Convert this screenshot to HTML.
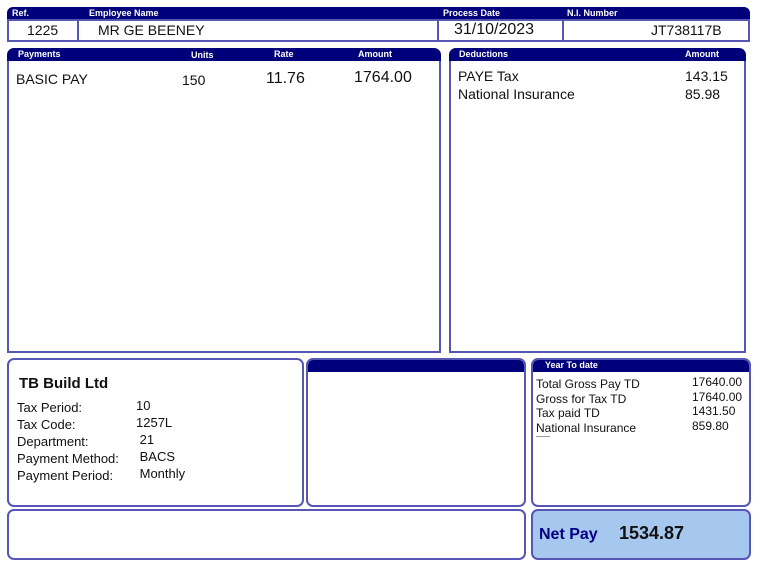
<!DOCTYPE html>
<html><head><style>
*{margin:0;padding:0;box-sizing:border-box}
body{width:768px;height:566px;background:#fff;position:relative;font-family:"Liberation Sans",Arial,sans-serif;color:#111;overflow:hidden}
.a{position:absolute}
.nav{background:#00007a;color:#fff;font-weight:bold;font-size:9px}
.bx{border:2px solid #5656b4;background:#fff}
.t{position:absolute;white-space:nowrap}
</style></head><body>
<!-- top header -->
<div class="a nav" style="left:7px;top:7px;width:743px;height:13px;border-radius:6px 6px 0 0"></div>
<div class="t" style="left:12px;top:8px;font-size:9px;color:#fff;font-weight:bold">Ref.</div>
<div class="t" style="left:89px;top:8px;font-size:9px;color:#fff;font-weight:bold">Employee Name</div>
<div class="t" style="left:443px;top:8px;font-size:9px;color:#fff;font-weight:bold">Process Date</div>
<div class="t" style="left:567px;top:8px;font-size:9px;color:#fff;font-weight:bold">N.I. Number</div>
<div class="a bx" style="left:7px;top:19px;width:72px;height:23px"></div>
<div class="a bx" style="left:77px;top:19px;width:362px;height:23px"></div>
<div class="a bx" style="left:437px;top:19px;width:127px;height:23px"></div>
<div class="a bx" style="left:562px;top:19px;width:188px;height:23px"></div>
<div class="t" style="left:27px;top:22px;font-size:14px">1225</div>
<div class="t" style="left:98px;top:22px;font-size:14px">MR GE BEENEY</div>
<div class="t" style="left:454px;top:21px;font-size:16px">31/10/2023</div>
<div class="t" style="left:651px;top:22px;font-size:14px">JT738117B</div>

<!-- payments -->
<div class="a nav" style="left:7px;top:48px;width:434px;height:14px;border-radius:7px 7px 0 0"></div>
<div class="t" style="left:18px;top:49px;font-size:9px;color:#fff;font-weight:bold">Payments</div>
<div class="t" style="left:191px;top:50px;font-size:9px;color:#fff;font-weight:bold">Units</div>
<div class="t" style="left:274px;top:49px;font-size:9px;color:#fff;font-weight:bold">Rate</div>
<div class="t" style="left:358px;top:49px;font-size:9px;color:#fff;font-weight:bold">Amount</div>
<div class="a bx" style="left:7px;top:61px;width:434px;height:292px;border-top:none"></div>
<div class="t" style="left:16px;top:71px;font-size:14px">BASIC PAY</div>
<div class="t" style="left:182px;top:72px;font-size:14px">150</div>
<div class="t" style="left:266px;top:70px;font-size:16px">11.76</div>
<div class="t" style="left:354px;top:69px;font-size:16px">1764.00</div>

<!-- deductions -->
<div class="a nav" style="left:449px;top:48px;width:297px;height:14px;border-radius:7px 7px 0 0"></div>
<div class="t" style="left:459px;top:49px;font-size:9px;color:#fff;font-weight:bold">Deductions</div>
<div class="t" style="left:685px;top:49px;font-size:9px;color:#fff;font-weight:bold">Amount</div>
<div class="a bx" style="left:449px;top:61px;width:297px;height:292px;border-top:none"></div>
<div class="t" style="left:458px;top:68px;font-size:14px">PAYE Tax</div>
<div class="t" style="left:458px;top:86px;font-size:14px">National Insurance</div>
<div class="t" style="left:685px;top:68px;font-size:14px">143.15</div>
<div class="t" style="left:685px;top:86px;font-size:14px">85.98</div>

<!-- company -->
<div class="a bx" style="left:7px;top:358px;width:297px;height:149px;border-radius:7px"></div>
<div class="t" style="left:19px;top:375px;font-size:15px;font-weight:bold">TB Build Ltd</div>
<div class="t" style="left:17px;top:399px;font-size:13px;line-height:17px">Tax Period:<br>Tax Code:<br>Department:<br>Payment Method:<br>Payment Period:</div>
<div class="t" style="left:136px;top:397px;font-size:13px;line-height:17px">10<br>1257L<br>&nbsp;21<br>&nbsp;BACS<br>&nbsp;Monthly</div>

<!-- middle -->
<div class="a bx" style="left:306px;top:358px;width:220px;height:149px;border-radius:7px;overflow:hidden"><div class="nav" style="height:14px;margin:-2px -2px 0"></div></div>

<!-- YTD -->
<div class="a bx" style="left:531px;top:358px;width:220px;height:149px;border-radius:7px;overflow:hidden"><div class="nav" style="height:14px;margin:-2px -2px 0;padding:2px 0 0 14px">Year To date</div></div>
<div class="t" style="left:536px;top:377px;font-size:12px;line-height:14.5px">Total Gross Pay TD<br>Gross for Tax TD<br>Tax paid TD<br>National Insurance</div>
<div class="t" style="left:692px;top:375px;font-size:12px;line-height:14.5px">17640.00<br>17640.00<br>1431.50<br>859.80</div>
<div class="a" style="left:536px;top:436px;width:14px;height:1px;background:#999"></div>

<!-- bottom -->
<div class="a bx" style="left:7px;top:509px;width:519px;height:51px;border-radius:7px"></div>
<div class="a bx" style="left:531px;top:509px;width:220px;height:51px;border-radius:7px;background:#a6c8ee"></div>
<div class="t" style="left:539px;top:526px;font-size:16px;font-weight:bold;color:#000080">Net Pay</div>
<div class="t" style="left:619px;top:523px;font-size:18px;font-weight:bold">1534.87</div>
</body></html>
